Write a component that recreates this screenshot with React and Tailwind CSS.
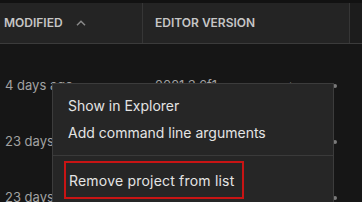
import React from 'react';

const rows = [
    { modified: '4 days ago', version: '2021.3.6f1' },
    { modified: '23 days ago', version: '2021.3.6f1' },
    { modified: '23 days ago', version: '2021.3.6f1' },
];

function ContextMenu() {
    return (
        <div className='absolute left-[52px] top-[83px] w-[282px] h-[140px] bg-[#262626] border border-[#3c3c3c] pt-[8px] text-[14px] text-[#e4e4e4]'>
            <div className='h-[27px] flex items-center pl-[15px]'>Show in Explorer</div>
            <div className='h-[27px] flex items-center pl-[15px]'>Add command line arguments</div>
            <div className='h-px bg-[#3a3a3a] mt-[9px]' />
            <div className='mt-[5px] ml-[11px] w-[180px] h-[38px] border-2 border-[#c81414] flex items-center pl-[3px] tracking-[0.2px]'>
                Remove project from list
            </div>
        </div>
    );
}

export default function App() {
    return (
        <div className='relative w-[362px] h-[202px] overflow-hidden bg-[#161616]' style={{ fontFamily: 'Inter, "Noto Sans", sans-serif' }}>
            <div className='h-[3px] bg-[#121212]' />
            <div className='h-[41px] flex bg-[#242424] border-b border-[#3b3b3b] text-[12px] font-semibold text-[#c6c6c6]'>
                <div className='w-[143px] flex items-center pl-[4px] border-r border-[#363636]'>
                    MODIFIED
                    <svg className='ml-[13px]' width='10' height='6' viewBox='0 0 10 6' fill='none' stroke='#8a8a8a' strokeWidth='1.5'>
                        <path d='M1 5.2L5 1.2L9 5.2' />
                    </svg>
                </div>
                <div className='w-[207px] flex items-center pl-[12px] border-r border-[#363636]'>EDITOR VERSION</div>
                <div className='flex-1 bg-[#1c1c1c]' />
            </div>
            <div className='text-[13px] text-[#a2a2a2]'>
                {rows.map((row, i) => (
                    <div key={i} className='h-[56px] flex items-center pt-[28px]'>
                        <div className='w-[143px] pl-[5px]'>{row.modified}</div>
                        <div className='w-[143px] pl-[12px]'>{row.version}</div>
                        <div className='w-[47px] text-[#8a8a8a] text-[9px]'>▲</div>
                        <div className='w-[4px] h-[4px] rounded-full bg-[#7a7a7a]' />
                    </div>
                ))}
            </div>
            <ContextMenu />
        </div>
    );
}
